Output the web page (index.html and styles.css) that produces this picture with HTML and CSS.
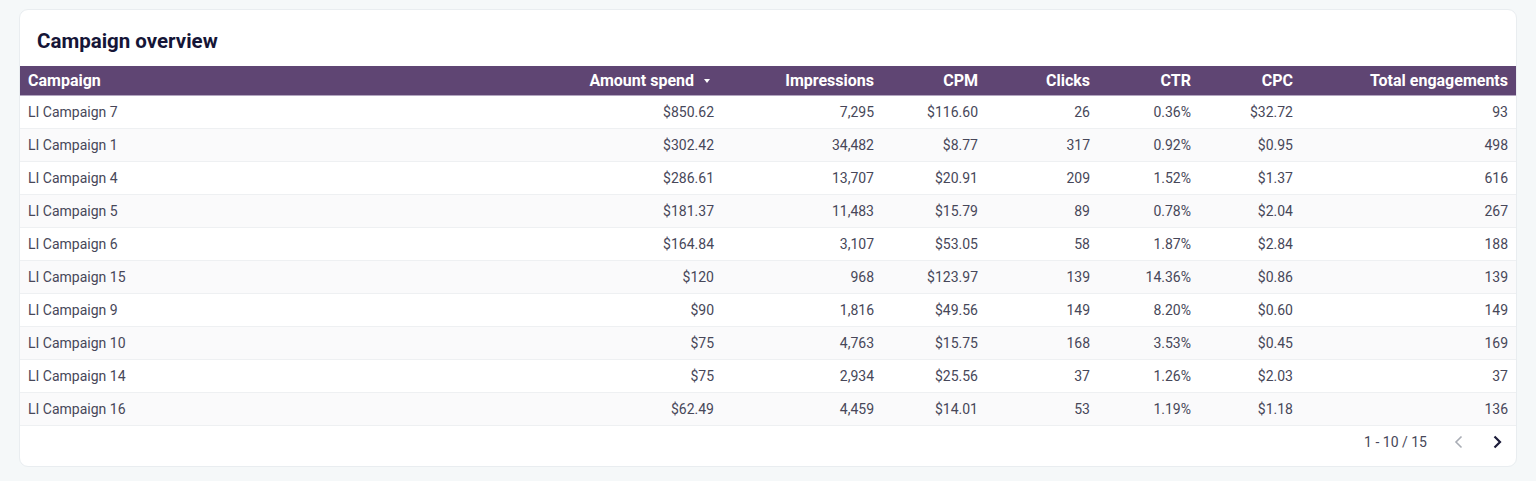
FILE: index.html
```html
<!DOCTYPE html>
<html>
<head>
<meta charset="utf-8">
<link rel="stylesheet" href="styles.css">
</head>
<body>
<div class="card">
  <h1 class="title">Campaign overview</h1>
  <table class="grid">
    <colgroup>
      <col class="c-name"><col class="c-amt"><col class="c-imp"><col class="c-cpm"><col class="c-clk"><col class="c-ctr"><col class="c-cpc"><col class="c-tot">
    </colgroup>
    <thead>
      <tr>
        <th class="left">Campaign</th>
        <th>Amount spend <span class="sort"></span></th>
        <th>Impressions</th>
        <th>CPM</th>
        <th>Clicks</th>
        <th>CTR</th>
        <th>CPC</th>
        <th>Total engagements</th>
      </tr>
    </thead>
    <tbody>
      <tr><td class="left">LI Campaign 7</td><td>$850.62</td><td>7,295</td><td>$116.60</td><td>26</td><td>0.36%</td><td>$32.72</td><td>93</td></tr>
      <tr><td class="left">LI Campaign 1</td><td>$302.42</td><td>34,482</td><td>$8.77</td><td>317</td><td>0.92%</td><td>$0.95</td><td>498</td></tr>
      <tr><td class="left">LI Campaign 4</td><td>$286.61</td><td>13,707</td><td>$20.91</td><td>209</td><td>1.52%</td><td>$1.37</td><td>616</td></tr>
      <tr><td class="left">LI Campaign 5</td><td>$181.37</td><td>11,483</td><td>$15.79</td><td>89</td><td>0.78%</td><td>$2.04</td><td>267</td></tr>
      <tr><td class="left">LI Campaign 6</td><td>$164.84</td><td>3,107</td><td>$53.05</td><td>58</td><td>1.87%</td><td>$2.84</td><td>188</td></tr>
      <tr><td class="left">LI Campaign 15</td><td>$120</td><td>968</td><td>$123.97</td><td>139</td><td>14.36%</td><td>$0.86</td><td>139</td></tr>
      <tr><td class="left">LI Campaign 9</td><td>$90</td><td>1,816</td><td>$49.56</td><td>149</td><td>8.20%</td><td>$0.60</td><td>149</td></tr>
      <tr><td class="left">LI Campaign 10</td><td>$75</td><td>4,763</td><td>$15.75</td><td>168</td><td>3.53%</td><td>$0.45</td><td>169</td></tr>
      <tr><td class="left">LI Campaign 14</td><td>$75</td><td>2,934</td><td>$25.56</td><td>37</td><td>1.26%</td><td>$2.03</td><td>37</td></tr>
      <tr><td class="left">LI Campaign 16</td><td>$62.49</td><td>4,459</td><td>$14.01</td><td>53</td><td>1.19%</td><td>$1.18</td><td>136</td></tr>
    </tbody>
  </table>
  <div class="pager">
    <span class="range">1 - 10 / 15</span>
    <button class="nav prev" aria-label="Previous">
      <svg width="16" height="16" viewBox="0 0 16 16"><path d="M10.5 2.5 L5 8 L10.5 13.5" fill="none" stroke="#a9adb5" stroke-width="1.6"/></svg>
    </button>
    <button class="nav next" aria-label="Next">
      <svg width="16" height="16" viewBox="0 0 16 16"><path d="M5.5 2.5 L11 8 L5.5 13.5" fill="none" stroke="#1c1c3a" stroke-width="2.2"/></svg>
    </button>
  </div>
</div>
</body>
</html>
```

FILE: styles.css
```css
html, body {
  margin: 0;
  padding: 0;
  background: #f5f8f9;
  font-family: Roboto, "Liberation Sans", sans-serif;
}
body {
  padding: 9px 19px 13px 19px;
}
.card {
  width: 1498px;
  height: 458px;
  box-sizing: border-box;
  background: #ffffff;
  border: 1px solid #e9edf0;
  border-radius: 9px;
  overflow: hidden;
  display: flex;
  flex-direction: column;
}
.title {
  margin: 0;
  padding: 18px 0 0 17px;
  height: 56px;
  box-sizing: border-box;
  font-size: 20.5px;
  font-weight: 700;
  color: #151537;
  line-height: 26px;
}
.grid {
  border-collapse: collapse;
  table-layout: fixed;
  width: 1498px;
  margin-left: -1px;
  font-size: 14px;
}
.c-name { width: 400px; }
.c-amt { width: 304px; }
.c-imp { width: 160px; }
.c-cpm { width: 104px; }
.c-clk { width: 112px; }
.c-ctr { width: 101px; }
.c-cpc { width: 102px; }
.c-tot { width: 215px; }
thead tr {
  background: #5f4573;
  border-bottom: 1px solid #b3a6c0;
}
th {
  height: 29px;
  padding: 0 9px;
  color: #ffffff;
  font-weight: 700;
  font-size: 16px;
  text-align: right;
  white-space: nowrap;
}
th.left, td.left { text-align: left; }
.sort {
  display: inline-block;
  width: 0;
  height: 0;
  border-left: 3.5px solid transparent;
  border-right: 3.5px solid transparent;
  border-top: 4px solid #ffffff;
  margin-left: 6px;
  margin-right: 4px;
  vertical-align: middle;
  position: relative;
  top: -1px;
}
td {
  height: 32px;
  padding: 0 9px;
  color: #474759;
  text-align: right;
  white-space: nowrap;
  border-bottom: 1px solid #eef0f2;
}
tbody tr:nth-child(even) { background: #fafafb; }
.pager {
  display: flex;
  align-items: center;
  justify-content: flex-end;
  height: 32px;
  padding: 0;
  font-size: 14px;
  color: #474759;
}
.range { margin-right: 13px; }
.nav {
  border: 0;
  background: transparent;
  padding: 0;
  width: 38px;
  height: 28px;
  display: flex;
  align-items: center;
  justify-content: center;
}
```
